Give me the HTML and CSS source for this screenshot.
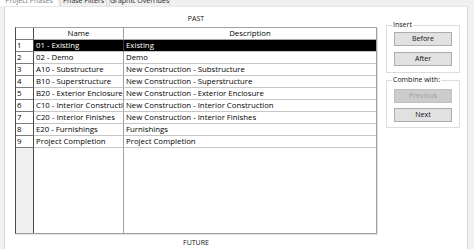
FILE: index.html
```html
<!DOCTYPE html>
<html>
<head>
<meta charset="utf-8">
<link rel="stylesheet" href="styles.css">
</head>
<body>
<div class="window">
  <div class="tabs">
    <div class="tab active">Project Phases</div>
    <div class="tab t2">Phase Filters</div>
    <div class="tab t3">Graphic Overrides</div>
  </div>
  <div class="panel">
    <div class="main">
      <div class="caption top">PAST</div>
      <div class="grid">
        <div class="row head">
          <div class="cell rh"></div>
          <div class="cell name">Name</div>
          <div class="cell desc">Description</div>
        </div>
        <div class="row selected">
          <div class="cell rh">1</div>
          <div class="cell name">01 - Existing</div>
          <div class="cell desc">Existing</div>
        </div>
        <div class="row">
          <div class="cell rh">2</div>
          <div class="cell name">02 - Demo</div>
          <div class="cell desc">Demo</div>
        </div>
        <div class="row">
          <div class="cell rh">3</div>
          <div class="cell name">A10 - Substructure</div>
          <div class="cell desc">New Construction - Substructure</div>
        </div>
        <div class="row">
          <div class="cell rh">4</div>
          <div class="cell name">B10 - Superstructure</div>
          <div class="cell desc">New Construction - Superstructure</div>
        </div>
        <div class="row">
          <div class="cell rh">5</div>
          <div class="cell name">B20 - Exterior Enclosure</div>
          <div class="cell desc">New Construction - Exterior Enclosure</div>
        </div>
        <div class="row">
          <div class="cell rh">6</div>
          <div class="cell name">C10 - Interior Construction</div>
          <div class="cell desc">New Construction - Interior Construction</div>
        </div>
        <div class="row">
          <div class="cell rh">7</div>
          <div class="cell name">C20 - Interior Finishes</div>
          <div class="cell desc">New Construction - Interior Finishes</div>
        </div>
        <div class="row">
          <div class="cell rh">8</div>
          <div class="cell name">E20 - Furnishings</div>
          <div class="cell desc">Furnishings</div>
        </div>
        <div class="row">
          <div class="cell rh">9</div>
          <div class="cell name">Project Completion</div>
          <div class="cell desc">Project Completion</div>
        </div>
        <div class="row filler">
          <div class="cell rh"></div>
          <div class="cell name"></div>
          <div class="cell desc"></div>
        </div>
      </div>
      <div class="caption bottom">FUTURE</div>
    </div>
    <div class="side">
      <fieldset class="group insert">
        <legend>Insert</legend>
        <button class="btn">Before</button>
        <button class="btn">After</button>
      </fieldset>
      <fieldset class="group combine">
        <legend>Combine with:</legend>
        <button class="btn" disabled>Previous</button>
        <button class="btn">Next</button>
      </fieldset>
    </div>
  </div>
</div>
</body>
</html>
```

FILE: styles.css
```css
* { box-sizing: border-box; }
html, body { margin: 0; padding: 0; }
body {
  width: 474px;
  height: 249px;
  overflow: hidden;
  background: #f0f0f0;
  font-family: "Open Sans", "Noto Sans", sans-serif;
  font-size: 7px;
  color: #000;
}
.window {
  width: 474px;
  height: 249px;
  display: flex;
  flex-direction: column;
  background: #f0f0f0;
}
.tabs {
  height: 6px;
  display: flex;
  overflow: hidden;
  flex: none;
}
.tab {
  height: 12px;
  margin-top: -5px;
  line-height: 9px;
  border: 1px solid #d9d9d9;
  background: #f0f0f0;
  color: #222;
  margin-right: 2px;
  white-space: nowrap;
  text-align: center;
  overflow: hidden;
}
.tab.active {
  background: #fff;
  color: #777;
  border-color: #fff;
  width: 58px;
}
.tab.t2 { width: 47px; }
.tab.t3 { width: 61px; }
.panel {
  flex: 1;
  margin-left: 4px;
  width: 464px;
  background: #fff;
  border-left: 1px solid #d9d9d9;
  border-right: 1px solid #d9d9d9;
  border-top: 1px solid #e6e6e6;
  display: flex;
  min-height: 0;
}
.main {
  margin-left: 10px;
  width: 362px;
  padding-top: 7px;
  display: flex;
  flex-direction: column;
}
.caption {
  text-align: center;
  line-height: 10px;
  height: 10px;
  color: #111;
}
.caption.top { margin-bottom: 3px; }
.caption.bottom { margin-top: 4px; }
.grid {
  height: 207px;
  border: 1px solid #a0a0a0;
  border-left-color: #4a4a4a;
  box-shadow: 1px 1px 0 #e2e2e2;
  display: flex;
  flex-direction: column;
  font-size: 7.8px;
}
.row {
  display: flex;
  height: 12px;
  flex: none;
}
.cell {
  height: 12px;
  line-height: 11px;
  border-bottom: 1px solid #c6c6c6;
  border-right: 1px solid #a0a0a0;
  white-space: nowrap;
  overflow: hidden;
  padding-left: 2px;
}
.rh {
  width: 18px;
  padding-left: 1px;
  border-right-color: #4a4a4a;
  border-bottom-color: #7a7a7a;
}
.name { width: 90px; }
.desc { flex: 1; border-right: none; }
.head .cell {
  text-align: center;
  padding-left: 0;
  border-bottom-color: #a8a8a8;
}
.head .rh { border-bottom-color: #7a7a7a; }
.selected .name,
.selected .desc {
  background: #000;
  color: #fff;
}
.selected .name { border-right-color: #3a3a3a; }
.row.filler {
  flex: 1;
  height: auto;
}
.filler .cell {
  height: auto;
  border-bottom: none;
}
.filler .rh { background: #efefef; }
.side {
  margin-left: 9px;
  padding-top: 13px;
  width: 74px;
  display: flex;
  flex-direction: column;
}
.group {
  margin: 0;
  border: 1px solid #dcdcdc;
  padding: 2px 6px 6px 7px;
  display: flex;
  flex-direction: column;
  min-width: 0;
}
.group legend {
  font-size: 7px;
  line-height: 10px;
  padding: 0 1px;
  margin-left: -2px;
  color: #111;
}
.combine {
  margin-top: 2px;
  padding-top: 4px;
  padding-bottom: 5px;
}
.btn {
  font-family: inherit;
  font-size: 7px;
  width: 58px;
  height: 14px;
  padding: 0;
  line-height: 12px;
  background: #e1e1e1;
  border: 1px solid #adadad;
  color: #111;
  border-radius: 0;
}
.insert .btn + .btn { margin-top: 6px; }
.combine .btn + .btn { margin-top: 5px; }
.btn:disabled {
  background: #cccccc;
  border-color: #bfbfbf;
  color: #a0a0a0;
}
```
